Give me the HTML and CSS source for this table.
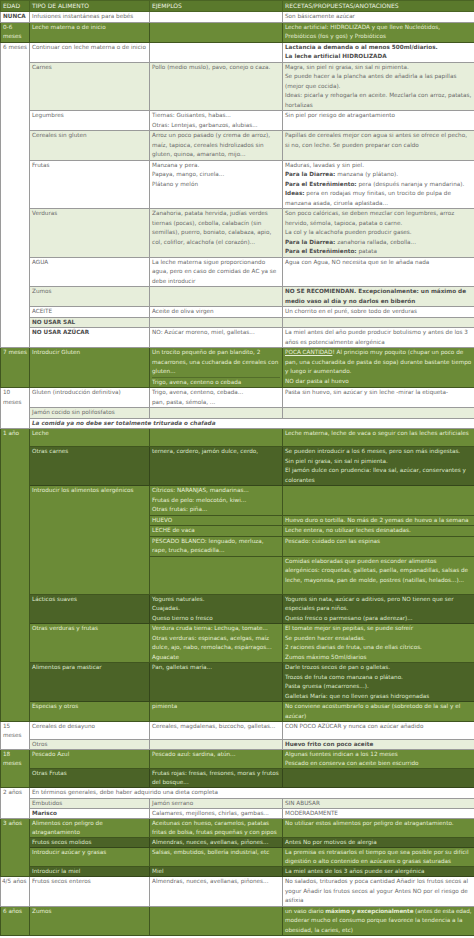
FILE: index.html
```html
<!DOCTYPE html>
<html lang="es">
<head>
<meta charset="utf-8">
<title>Alimentación complementaria</title>
<link rel="stylesheet" href="styles.css">
</head>
<body>
<table class="tabla">
<colgroup><col class="c1"><col class="c2"><col class="c3"><col class="c4"></colgroup>
<tr class="h"><td>EDAD</td><td>TIPO DE ALIMENTO</td><td>EJEMPLOS</td><td>RECETAS/PROPUESTAS/ANOTACIONES</td></tr>
<tr class="w"><td class="e ew"><b>NUNCA</b></td><td>Infusiones instantáneas para bebés</td><td></td><td>Son básicamente azúcar</td></tr>
<tr class="m"><td class="e em">0-6 meses</td><td>Leche materna o de inicio</td><td></td><td>Leche artificial: HIDROLIZADA y que lleve Nucleótidos, Prebióticos (fos y gos) y Probióticos</td></tr>
<tr class="w"><td class="e ew" rowspan="11">6 meses</td><td>Continuar con leche materna o de inicio</td><td></td><td><b>Lactancia a demanda o al menos 500ml/diarios.<br>La leche artificial HIDROLIZADA</b></td></tr>
<tr class="l"><td>Carnes</td><td>Pollo (medio muslo), pavo, conejo o caza.</td><td>Magra, sin piel ni grasa, sin sal ni pimienta.<br>Se puede hacer a la plancha antes de añadirla a las papillas (mejor que cocida).<br>Ideas: picarla y rehogarla en aceite. Mezclarla con arroz, patatas, hortalizas</td></tr>
<tr class="w"><td>Legumbres</td><td>Tiernas: Guisantes, habas...<br>Otras: Lentejas, garbanzos, alubias...</td><td>Sin piel por riesgo de atragantamiento</td></tr>
<tr class="l"><td>Cereales sin gluten</td><td>Arroz un poco pasado (y crema de arroz), maíz, tapioca, cereales hidrolizados sin gluten, quinoa, amaranto, mijo...</td><td>Papillas de cereales mejor con agua si antes se ofrece el pecho, si no, con leche. Se pueden preparar con caldo</td></tr>
<tr class="w"><td>Frutas</td><td>Manzana y pera.<br>Papaya, mango, ciruela...<br>Plátano y melón</td><td>Maduras, lavadas y sin piel.<br><b>Para la Diarrea:</b> manzana (y plátano).<br><b>Para el Estreñimiento:</b> pera (después naranja y mandarina).<br><b>Ideas:</b> pera en rodajas muy finitas, un trocito de pulpa de manzana asada, ciruela aplastada...</td></tr>
<tr class="l"><td>Verduras</td><td>Zanahoria, patata hervida, judías verdes tiernas (pocas), cebolla, calabacín (sin semillas), puerro, boniato, calabaza, apio, col, coliflor, alcachofa (el corazón)...</td><td>Son poco calóricas, se deben mezclar con legumbres, arroz hervido, sémola, tapioca, patata o carne.<br>La col y la alcachofa pueden producir gases.<br><b>Para la Diarrea:</b> zanahoria rallada, cebolla...<br><b>Para el Estreñimiento:</b> patata</td></tr>
<tr class="w"><td>AGUA</td><td>La leche materna sigue proporcionando agua, pero en caso de comidas de AC ya se debe introducir</td><td>Agua con Agua, NO necesita que se le añada nada</td></tr>
<tr class="l"><td>Zumos</td><td></td><td><b>NO SE RECOMIENDAN. Excepcionalmente: un máximo de medio vaso al día y no darlos en biberón</b></td></tr>
<tr class="w"><td>ACEITE</td><td>Aceite de oliva virgen</td><td>Un chorrito en el puré, sobre todo de verduras</td></tr>
<tr class="l"><td><b>NO USAR SAL</b></td><td></td><td></td></tr>
<tr class="w"><td><b>NO USAR AZÚCAR</b></td><td>NO: Azúcar moreno, miel, galletas...</td><td>La miel antes del año puede producir botulismo y antes de los 3 años es potencialmente alergénica</td></tr>
<tr class="m"><td class="e em">7 meses</td><td>Introducir Gluten</td><td><div class="sub">Un trocito pequeño de pan blandito, 2 macarrones, una cucharada de cereales con gluten...</div><div>Trigo, avena, centeno o cebada</div></td><td><u>POCA CANTIDAD</u>! Al principio muy poquito (chupar un poco de pan, una cucharadita de pasta de sopa) durante bastante tiempo y luego ir aumentando.<br>NO dar pasta al huevo</td></tr>
<tr class="w"><td class="e ew" rowspan="3">10 meses</td><td>Gluten (introducción definitiva)</td><td>Trigo, avena, centeno, cebada...<br>pan, pasta, sémola, ...</td><td>Pasta sin huevo, sin azúcar y sin leche -mirar la etiqueta-</td></tr>
<tr class="l"><td>Jamón cocido sin polifosfatos</td><td></td><td></td></tr>
<tr class="w"><td colspan="3" class="aviso">La comida ya no debe ser totalmente triturada o chafada</td></tr>
<tr class="m"><td class="e em" rowspan="11">1 año</td><td class="tall2">Leche</td><td></td><td>Leche materna, leche de vaca o seguir con las leches artificiales</td></tr>
<tr class="d"><td>Otras carnes</td><td>ternera, cordero, jamón dulce, cerdo,</td><td>Se pueden introducir a los 6 meses, pero son más indigestas.<br>Sin piel ni grasa, sin sal ni pimienta.<br>El jamón dulce con prudencia: lleva sal, azúcar, conservantes y colorantes</td></tr>
<tr class="m"><td rowspan="5">Introducir los alimentos alergénicos</td><td>Cítricos: NARANJAS, mandarinas...<br>Frutas de pelo: melocotón, kiwi...<br>Otras frutas: piña...</td><td></td></tr>
<tr class="m"><td>HUEVO</td><td>Huevo duro o tortilla. No más de 2 yemas de huevo a la semana</td></tr>
<tr class="m"><td>LECHE de vaca</td><td>Leche entera, no utilizar leches desnatadas.</td></tr>
<tr class="m"><td>PESCADO BLANCO: lenguado, merluza, rape, trucha, pescadilla...</td><td>Pescado: cuidado con las espinas</td></tr>
<tr class="m"><td class="gap"></td><td class="gap">Comidas elaboradas que pueden esconder alimentos alergénicos: croquetas, galletas, paella, empanadillas, salsas de leche, mayonesa, pan de molde, postres (natillas, helados...)...</td></tr>
<tr class="d"><td>Lácticos suaves</td><td>Yogures naturales.<br>Cuajadas.<br>Queso tierno o fresco</td><td>Yogures sin nata, azúcar o aditivos, pero NO tienen que ser especiales para niños.<br>Queso fresco o parmesano (para aderezar)...</td></tr>
<tr class="m"><td>Otras verduras y frutas</td><td>Verdura cruda tierna: Lechuga, tomate...<br>Otras verduras: espinacas, acelgas, maíz dulce, ajo, nabo, remolacha, espárragos...<br>Aguacate</td><td>El tomate mejor sin pepitas, se puede sofreír<br>Se pueden hacer ensaladas.<br>2 raciones diarias de fruta, una de ellas cítricos.<br>Zumos máximo 50ml/diarios</td></tr>
<tr class="d"><td>Alimentos para masticar</td><td>Pan, galletas maría...</td><td>Darle trozos secos de pan o galletas.<br>Trozos de fruta como manzana o plátano.<br>Pasta gruesa (macarrones...).<br>Galletas María: que no lleven grasas hidrogenadas</td></tr>
<tr class="m"><td>Especias y otros</td><td>pimienta</td><td>No conviene acostumbrarlo o abusar (sobretodo de la sal y el azúcar)</td></tr>
<tr class="w c"><td class="e ew" rowspan="2">15 meses</td><td class="tall3">Cereales de desayuno</td><td>Cereales, magdalenas, bizcocho, galletas...</td><td>CON POCO AZÚCAR y nunca con azúcar añadido</td></tr>
<tr class="l c"><td>Otros</td><td></td><td><b>Huevo frito con poco aceite</b></td></tr>
<tr class="m c"><td class="e em" rowspan="2">18 meses</td><td>Pescado Azul</td><td>Pescado azul: sardina, atún...</td><td>Algunas fuentes indican a los 12 meses<br>Pescado en conserva con aceite bien escurrido</td></tr>
<tr class="d c"><td>Otras Frutas</td><td>Frutas rojas: fresas, fresones, moras y frutos del bosque...</td><td></td></tr>
<tr class="w c"><td class="e ew" rowspan="3">2 años</td><td colspan="3">En términos generales, debe haber adquirido una dieta completa</td></tr>
<tr class="l c"><td>Embutidos</td><td>Jamón serrano</td><td>SIN ABUSAR</td></tr>
<tr class="w c"><td><b>Marisco</b></td><td>Calamares, mejillones, chirlas, gambas...</td><td>MODERADAMENTE</td></tr>
<tr class="m c"><td class="e em" rowspan="4">3 años</td><td>Alimentos con peligro de atragantamiento</td><td>Aceitunas con hueso, caramelos, patatas fritas de bolsa, frutas pequeñas y con pipos</td><td>No utilizar estos alimentos por peligro de atragantamiento.</td></tr>
<tr class="d c"><td>Frutos secos molidos</td><td>Almendras, nueces, avellanas, piñones...</td><td>Antes No por motivos de alergia</td></tr>
<tr class="m c"><td>Introducir azúcar y grasas</td><td>Salsas, embutidos, bollería industrial, etc</td><td>La premisa es retrasarlos el tiempo que sea posible por su difícil digestión o alto contenido en azúcares o grasas saturadas</td></tr>
<tr class="d c"><td>Introducir la miel</td><td>Miel</td><td>La miel antes de los 3 años puede ser alergénica</td></tr>
<tr class="w"><td class="e ew nw">4/5 años</td><td>Frutos secos enteros</td><td>Almendras, nueces, avellanas, piñones...</td><td>No salados, triturados y poca cantidad Añadir los frutos secos al yogur Añadir los frutos secos al yogur Antes NO por el riesgo de asfixia</td></tr>
<tr class="m"><td class="e em">6 años</td><td>Zumos</td><td></td><td><span class="tight">un vaso diario <b>máximo y excepcionalmente</b> (antes de esta edad,</span> moderar mucho el consumo porque favorece la tendencia a la obesidad, la caries, etc)</td></tr>
</table>
</body>
</html>
```
FILE: styles.css
```css
html, body {
  margin: 0;
  padding: 0;
  background: #ffffff;
}
.tabla {
  width: 474px;
  border-collapse: collapse;
  table-layout: fixed;
  font-family: "DejaVu Sans", Verdana, sans-serif;
  font-size: 5.7px;
  line-height: 9.5px;
}
.c1 { width: 29px; }
.c2 { width: 120px; }
.c3 { width: 133px; }
.c4 { width: 192px; }
.tabla td {
  vertical-align: top;
  padding: 0 2px;
  border: 1px solid #9a9a9a;
  border-left-color: #4a4a4a;
  overflow: hidden;
  word-wrap: break-word;
}
.tabla b { font-weight: bold; }
.tabla .tight { letter-spacing: -0.12px; }
.tabla tr.c td { line-height: 9.1px; }
.h td {
  background: #5a792c;
  color: #eef3e2;
  border-color: #4a6424;
  height: 10px;
  font-size: 6px;
}
.w td { background: #ffffff; color: #6a6a6a; }
.l td { background: #e7eedb; color: #6a6a6a; }
.w b, .l b { color: #4d4d4d; }
.m td {
  background: #6b8b37;
  color: #e6eed6;
  border-color: #40561f;
  border-left-color: #333d22;
}
.d td {
  background: #4b6327;
  color: #dfe8cc;
  border-color: #34461a;
  border-left-color: #2c3619;
}
.tabla td.e { border-left-color: transparent; }
.tabla td.ew { background: #ffffff; color: #6a6a6a; border-color: #9a9a9a; }
.tabla td.em { background: #6b8b37; color: #e9f0da; border-color: #40561f; }
.tabla td.nw { white-space: nowrap; padding: 0 0 0 1px; overflow: visible; }
.tabla td.gap { height: 37px; }
.tabla td.tall2 { height: 17px; }
.tabla td.tall3 { height: 17px; }
.sub { border-bottom: 1px solid rgba(40, 55, 20, 0.35); }
.aviso {
  font-style: italic;
  font-weight: bold;
  color: #555555 !important;
}
```
